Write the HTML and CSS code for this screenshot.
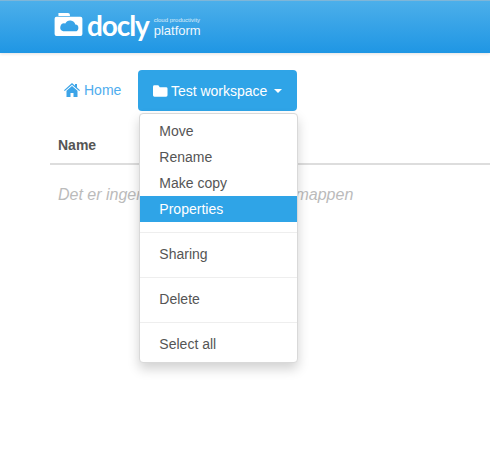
FILE: index.html
```html
<!DOCTYPE html>
<html lang="en">
<head>
<meta charset="utf-8">
<title>Docly</title>
<link rel="stylesheet" href="styles.css">
</head>
<body>
<header class="topbar">
  <div class="logo">
    <svg class="logo-icon" width="29" height="23" viewBox="0 0 29 24">
      <path fill="#fff" d="M4 0h10a2 2 0 0 1 2 2v1H4z"/>
      <path fill="#fff" fill-rule="evenodd" d="M2 4h25a2 2 0 0 1 2 2v16a2 2 0 0 1-2 2H2a2 2 0 0 1-2-2V6a2 2 0 0 1 2-2zM9 19h12a3.500 3.500 0 0 0 .6-7 5.500 5.500 0 0 0-10.400-1A4 4 0 0 0 9 19z"/>
    </svg>
    <span class="logo-name">docly</span>
    <span class="logo-side">
      <span class="logo-tag">cloud productivity</span>
      <span class="logo-platform">platform</span>
    </span>
  </div>
</header>
<main class="content">
  <nav class="crumbs">
    <a class="home-link">
      <svg width="16" height="14" viewBox="0 0 16 14"><path fill="#3ba4e8" d="M8 0l3 2.700V1h2v3.500L16 7.200l-.8.900L8 1.800.8 8.100 0 7.200zM8 3l5.500 4.800V14H9.500v-4h-3v4H2.500V7.800z"/></svg>
      Home
    </a>
    <div class="dropdown">
      <button class="dropdown-toggle">
        <svg width="15" height="12" viewBox="0 0 15 12"><path fill="#fff" d="M1.500 0h4L7 2h6.500A1.500 1.500 0 0 1 15 3.500v7a1.500 1.500 0 0 1-1.500 1.500h-12A1.500 1.500 0 0 1 0 10.500v-9A1.500 1.500 0 0 1 1.500 0z"/></svg>
        <span class="toggle-label">Test workspace</span>
        <span class="caret"></span>
      </button>
      <ul class="menu">
        <li class="item">Move</li>
        <li class="item">Rename</li>
        <li class="item">Make copy</li>
        <li class="item active">Properties</li>
        <li class="divider"></li>
        <li class="item">Sharing</li>
        <li class="divider"></li>
        <li class="item">Delete</li>
        <li class="divider"></li>
        <li class="item">Select all</li>
      </ul>
    </div>
  </nav>
  <div class="table-head">Name</div>
  <p class="empty">Det er ingen dokumenter i denne mappen</p>
</main>
</body>
</html>
```
FILE: styles.css
```css
* { box-sizing: border-box; }
html, body { margin: 0; padding: 0; }
body {
  width: 490px;
  height: 456px;
  overflow: hidden;
  background: #fff;
  font-family: "Liberation Sans", Arial, sans-serif;
  font-size: 14px;
  color: #555;
}
.topbar {
  height: 53px;
  padding: 12px 0 0 54px;
  background: linear-gradient(to bottom, #4cafea 0%, #1f96e4 100%);
  border-top: 1px solid #7fb6d8;
  box-shadow: 0 1px 3px rgba(0,0,0,.12);
}
.logo { display: flex; align-items: flex-start; color: #fff; }
.logo-icon { flex: none; }
.logo-name {
  margin: -7px 0 0 4px;
  font-family: "Lato", sans-serif;
  font-weight: 700;
  font-size: 28px;
  line-height: 38px;
  letter-spacing: -1.1px;
}
.logo-side { display: flex; flex-direction: column; margin: 4px 0 0 5px; }
.logo-tag { font-size: 6px; line-height: 7px; opacity: .8; white-space: nowrap; }
.logo-platform { font-size: 13px; line-height: 13px; opacity: .92; }
.content { padding: 17px 0 0 50px; }
.crumbs { display: flex; align-items: flex-start; height: 41px; }
.home-link {
  display: flex;
  align-items: center;
  gap: 4px;
  height: 40px;
  margin: 0 17px 0 14px;
  color: #4fadee;
  font-size: 14px;
}
.dropdown { position: relative; }
.dropdown-toggle {
  display: flex;
  align-items: center;
  gap: 3px;
  width: 159px;
  height: 41px;
  padding: 0 15px;
  border: 0;
  border-radius: 4px;
  background: #2fa4e7;
  color: #fff;
  font: 14px "Liberation Sans", Arial, sans-serif;
}
.toggle-label { white-space: nowrap; }
.caret {
  flex: none;
  margin-left: 4px;
  width: 0;
  height: 0;
  border-top: 4px solid #fff;
  border-left: 4px solid transparent;
  border-right: 4px solid transparent;
}
.menu {
  position: absolute;
  top: 43px;
  left: 1px;
  width: 159px;
  height: 250px;
  margin: 0;
  padding: 4px 0;
  list-style: none;
  background: #fff;
  border: 1px solid #d9d9d9;
  border-radius: 4px;
  box-shadow: 0 6px 12px rgba(0,0,0,.18);
  z-index: 2;
}
.item { height: 26px; padding: 0 19px; line-height: 26px; color: #555; }
.item.active { background: #2fa4e7; color: #fff; }
.divider { height: 1px; margin: 10px 0 8px; background: #eee; }
.table-head {
  height: 42px;
  margin-top: 12px;
  padding: 14px 0 0 8px;
  border-bottom: 2px solid #ddd;
  font-weight: 700;
  line-height: 16px;
  color: #555;
}
.empty {
  margin: 21px 0 0 8px;
  font-size: 16px;
  font-style: italic;
  line-height: 18px;
  color: #bbb;
  white-space: nowrap;
}
```
